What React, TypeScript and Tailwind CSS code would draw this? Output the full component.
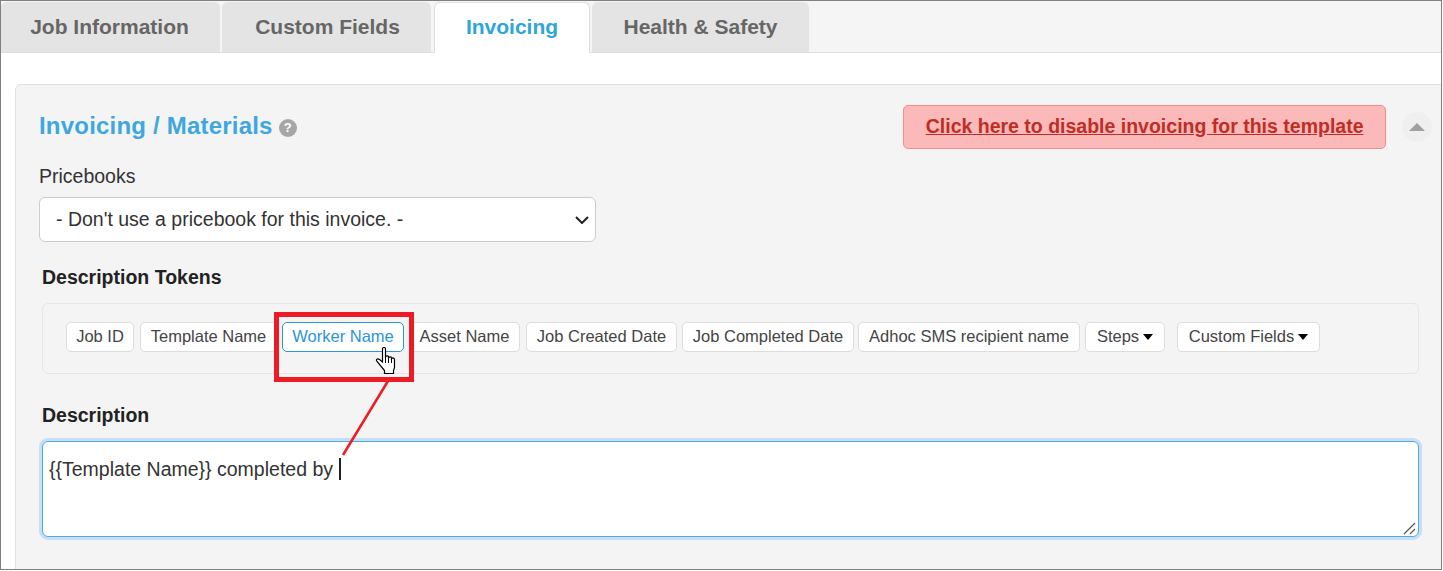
const tabs = [
  { label: "Job Information", width: "w-[219px] pr-[2px]", active: false },
  { label: "Custom Fields", width: "w-[209px] pl-[2px]", active: false },
  { label: "Invoicing", width: "w-[156px]", active: true },
  { label: "Health & Safety", width: "w-[217px]", active: false },
];

const tokens = [
  { label: "Job ID", className: "w-[68px] ml-0" },
  { label: "Template Name", className: "w-[137px] ml-[6px]" },
  { label: "Worker Name", className: "w-[122px] ml-[5px] !border-[#2a94e0] !text-[#2a94e0]" },
  { label: "Asset Name", className: "w-[111px] ml-[5px]" },
  { label: "Job Created Date", className: "w-[151px] ml-[6px]" },
  { label: "Job Completed Date", className: "w-[172px] ml-[5px]" },
  { label: "Adhoc SMS recipient name", className: "w-[222px] ml-[4px]" },
];

function Caret() {
  return <span className="ml-[4px] mt-[2px] inline-block h-0 w-0 border-x-[5.500px] border-t-[6px] border-x-transparent border-t-black" />;
}

export default function App() {
  return (
    <div className="relative h-[570px] w-[1442px] overflow-hidden border border-[#808080] bg-white font-['Liberation_Sans',Arial,sans-serif]">
      {/* tab strip */}
      <div className="flex h-[52px] items-end gap-[2px] border-b border-[#dddddd] bg-[#f5f5f5] pt-px">
        {tabs.map((tab) => (
          <div
            key={tab.label}
            className={`flex h-[50px] items-center justify-center rounded-t-[6px] border border-b-0 pb-[2px] text-[21px] font-bold ${tab.width} ${
              tab.active
                ? "relative -mb-px ml-px h-[51px] border-[#dddddd] bg-white text-[#2ea5de]"
                : "border-[#e4e4e4] bg-[#e4e4e4] text-[#666666]"
            }`}
          >
            {tab.label}
          </div>
        ))}
      </div>

      {/* panel */}
      <div className="ml-[14px] mr-[-20px] mt-[31px] h-[520px] rounded-[6px] border border-[#e0e0e0] bg-[#f4f4f4] pl-[23px] pt-[20px]">
        <div className="flex h-[44px] items-center">
          <h2 className="pb-[2px] text-[24px] font-bold tracking-[0.2px] text-[#3fa7e0]">Invoicing / Materials</h2>
          <span className="ml-[6px] mt-[2px] flex h-[18px] w-[18px] items-center justify-center rounded-full bg-[#a6a6a6] text-[13px] font-bold text-white">?</span>
          <div className="ml-[606px] flex h-[44px] w-[483px] items-center justify-center rounded-[5px] border border-[#ee8f8f] bg-[#fbb9b9] pl-px text-[19.500px] font-bold text-[#c02d26] underline">
            Click here to disable invoicing for this template
          </div>
          <div className="ml-[16px] flex h-[30px] w-[30px] items-center justify-center rounded-full bg-[#efefef]">
            <span className="h-0 w-0 border-x-[8px] border-b-[8px] border-x-transparent border-b-[#a0a0a0]" />
          </div>
        </div>

        <div className="mt-[16px] h-[23px] text-[19.500px] leading-[23px] text-[#333333]">Pricebooks</div>
        <div className="relative mt-[9px] h-[45px] w-[557px]">
          <select className="block h-full w-full appearance-none rounded-[6px] border border-[#cccccc] bg-white pl-[16px] text-[19.500px] text-[#333333]">
            <option>- Don't use a pricebook for this invoice. -</option>
          </select>
          <svg className="pointer-events-none absolute left-[536px] top-[19px]" width="14" height="8" viewBox="0 0 14 8">
            <path d="M1 1l6 6 6-6" fill="none" stroke="#222222" strokeWidth="2" />
          </svg>
        </div>

        <div className="ml-[3px] mt-[24px] h-[23px] text-[19.500px] font-bold leading-[23px] text-[#222222]">Description Tokens</div>

        <div className="ml-[3px] mt-[14px] flex h-[71px] w-[1377px] items-start rounded-[6px] border border-[#e6e6e6] pl-[23px] pt-[18px]">
          {tokens.map((token) => (
            <div
              key={token.label}
              className={`flex h-[30px] items-center justify-center rounded-[5px] border border-[#dddddd] bg-white pb-[2px] text-[16.500px] text-[#444444] ${token.className}`}
            >
              {token.label}
            </div>
          ))}
          <div className="ml-[5px] flex h-[30px] w-[80px] items-center justify-center rounded-[5px] border border-[#dddddd] bg-white pb-[2px] text-[16.500px] text-[#444444]">
            Steps
            <Caret />
          </div>
          <div className="ml-[12px] flex h-[30px] w-[143px] items-center justify-center rounded-[5px] border border-[#dddddd] bg-white pb-[2px] text-[16.500px] text-[#444444]">
            Custom Fields
            <Caret />
          </div>
        </div>

        <div className="ml-[3px] mt-[30px] h-[23px] text-[19.500px] font-bold leading-[23px] text-[#222222]">Description</div>

        <textarea
          readOnly
          value="{{Template Name}} completed by"
          className="ml-[3px] mt-[14px] block h-[96px] w-[1377px] resize-none rounded-[6px] border border-[#4fa9ea] bg-white px-[6px] py-[14px] text-[19.500px] leading-[26px] text-[#333333] shadow-[0_0_0_3px_#c6dff4] outline-none"
        />
      </div>

      {/* textarea grip and callout drawn over the page */}
      <svg className="absolute left-[1402px] top-[521px]" width="14" height="14" viewBox="0 0 14 14">
        <path d="M1 12L12 1M7 12l5-5" fill="none" stroke="#555555" strokeWidth="1.200" />
      </svg>
      <div className="absolute left-[273px] top-[311px] h-[70px] w-[140px] border-[5px] border-[#ed1c24]" />
      <svg className="absolute left-[335px] top-[378px]" width="60" height="80" viewBox="0 0 60 80">
        <line x1="52" y1="2" x2="7" y2="76" stroke="#ed1c24" strokeWidth="2.500" />
      </svg>
      <span className="absolute left-[338px] top-[457px] h-[22px] w-[2px] bg-[#222222]" />
      <svg className="absolute left-[374px] top-[346px]" width="24" height="28" viewBox="0 0 24 28">
        <path
          d="M7.500 2c0-2 3-2 3 0v7.500c1-1 3-1 3 .5v.5c1-1 3-1 3 .5v.5c1-1 3-.5 3 1v8l-1 3v3H9.500v-3L2 14.500c-1.500-2 .5-3.500 2.500-2l3 2.500z"
          fill="#ffffff"
          stroke="#000000"
          strokeWidth="1.200"
        />
        <path d="M10.500 10v6M13.500 11v5M16.500 12v4" stroke="#000000" strokeWidth="1" />
      </svg>
    </div>
  );
}
